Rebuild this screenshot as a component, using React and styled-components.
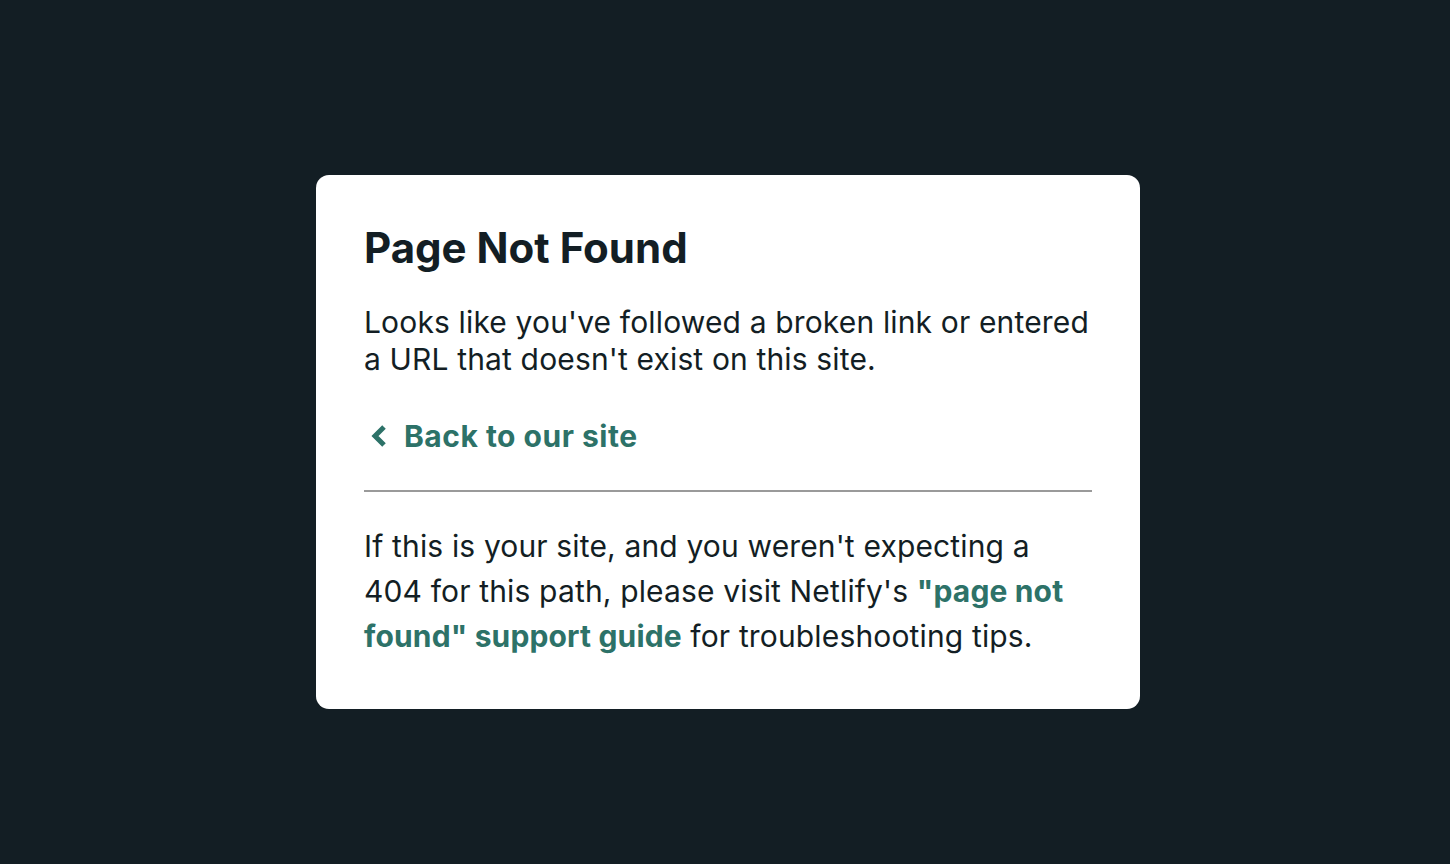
import React from 'react';
import styled, { createGlobalStyle } from 'styled-components';

const GlobalStyle = createGlobalStyle`
    html, body {
        margin: 0;
        padding: 0;
        background: #131e24;
    }
    body {
        font-family: Inter, 'Noto Sans', sans-serif;
        -webkit-font-smoothing: antialiased;
    }
`;

export default function App() {
    return (
        <Page>
            <GlobalStyle />
            <Card>
                <Title>Page Not Found</Title>
                <Lead>
                    Looks like you've followed a broken link or entered a URL that doesn't exist
                    on this site.
                </Lead>
                <BackLink href="#">
                    <Chevron viewBox="0 0 20 26" aria-hidden="true">
                        <path d="M15 4 6 13l9 9" />
                    </Chevron>
                    Back to our site
                </BackLink>
                <Divider />
                <Note>
                    If this is your site, and you weren't expecting a 404 for this path, please
                    visit Netlify's <Strong href="#">"page not found" support guide</Strong> for
                    troubleshooting tips.
                </Note>
            </Card>
        </Page>
    );
}

const Page = styled.div`
    min-height: 864px;
    box-sizing: border-box;
    display: flex;
    align-items: center;
    justify-content: center;
    padding: 20px 0 0 6px;
`;

const Card = styled.main`
    width: 824px;
    box-sizing: border-box;
    background: #ffffff;
    border-radius: 13px;
    padding: 48px 48px 50px;
    color: #131e24;
`;

const Title = styled.h1`
    margin: 0 0 31px 0;
    font-size: 42px;
    line-height: 1.2;
    font-weight: 700;
`;

const Lead = styled.p`
    margin: 0 0 40px 0;
    font-size: 30px;
    line-height: 37px;
    letter-spacing: 0.15px;
`;

const BackLink = styled.a`
    display: inline-flex;
    align-items: center;
    gap: 15px;
    padding-left: 5px;
    color: #2d7268;
    font-size: 30px;
    font-weight: 700;
    letter-spacing: 0.5px;
    text-decoration: none;
`;

const Chevron = styled.svg`
    width: 20px;
    height: 26px;
    fill: none;
    stroke: currentColor;
    stroke-width: 5;
    stroke-linecap: butt;
    stroke-linejoin: miter;
`;

const Divider = styled.hr`
    margin: 36px 0 32px 0;
    border: 0;
    border-top: 2px solid #9a9a9a;
`;

const Note = styled.p`
    margin: 0;
    font-size: 30px;
    line-height: 45px;
    letter-spacing: 0.15px;
`;

const Strong = styled.a`
    color: #2d7268;
    font-weight: 700;
    text-decoration: none;
`;
